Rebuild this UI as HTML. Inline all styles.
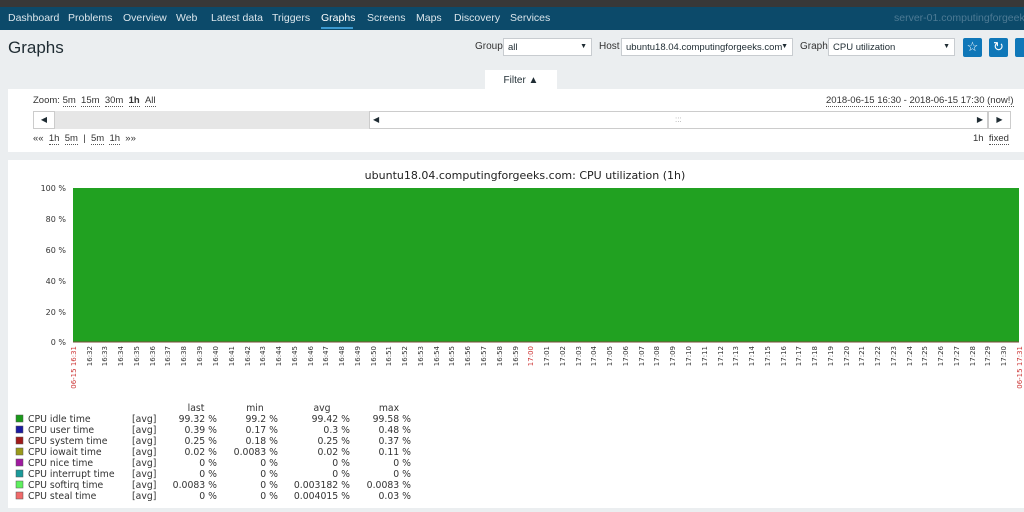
<!DOCTYPE html>
<html><head><meta charset="utf-8"><style>
*{margin:0;padding:0;box-sizing:border-box}
body{width:1024px;height:512px;overflow:hidden;background:#ebeef0;font-family:"Liberation Sans",sans-serif;position:relative;color:#1f2c33}
.a{position:absolute;white-space:nowrap}
.nav{left:0;top:7px;width:1024px;height:23px;background:#0c4a6a;overflow:hidden}
.nav span{position:absolute;top:5px;font-size:10.5px;color:#dbe6ec;white-space:nowrap}
.u{border-bottom:1px dotted #555;line-height:11px}
.sel{height:18px;background:#fff;border:1px solid #c8ccd0;font-size:9.5px;padding:3px 4px;overflow:hidden}
.sel:after{content:"▼";position:absolute;right:4px;top:4px;font-size:7px}
.btn{width:19px;height:19px;background:#0f77b8;border-radius:2px;color:#fff;text-align:center;font-size:13px;line-height:18px}
.sm{font-size:9.5px;color:#333}
</style></head><body>
<div class="a" style="left:0;top:0;width:1024px;height:7px;background:#383838"></div>
<div class="a nav">
<span style="left:8px">Dashboard</span><span style="left:68px">Problems</span><span style="left:123px">Overview</span><span style="left:176px">Web</span><span style="left:211px">Latest data</span><span style="left:272px">Triggers</span><span style="left:321px;color:#fff">Graphs</span><span style="left:367px">Screens</span><span style="left:416px">Maps</span><span style="left:454px">Discovery</span><span style="left:510px">Services</span>
<span style="left:894px;color:#4d7a94">server-01.computingforgeeks.com</span>
<div class="a" style="left:321px;top:20px;width:32px;height:2px;background:#3d9ad0"></div>
</div>
<div class="a" style="left:8px;top:38px;font-size:17px;color:#1f2c33">Graphs</div>
<div class="a sm" style="left:475px;top:41px;font-size:10px">Group</div>
<div class="a sel" style="left:503px;top:38px;width:89px">all</div>
<div class="a sm" style="left:599px;top:41px;font-size:10px">Host</div>
<div class="a sel" style="left:621px;top:38px;width:172px">ubuntu18.04.computingforgeeks.com</div>
<div class="a sm" style="left:800px;top:41px;font-size:10px">Graph</div>
<div class="a sel" style="left:828px;top:38px;width:127px">CPU utilization</div>
<div class="a btn" style="left:963px;top:38px">☆</div>
<div class="a btn" style="left:989px;top:38px">↻</div>
<div class="a btn" style="left:1015px;top:38px"></div>
<div class="a" style="left:485px;top:70px;width:72px;height:20px;background:#fff;font-size:10px;text-align:center;padding-top:5px">Filter ▲</div>
<div class="a" style="left:8px;top:89px;width:1016px;height:63px;background:#fff"></div>
<div class="a sm" style="left:33px;top:95px">Zoom: <span class="u">5m</span> &nbsp;<span class="u">15m</span> &nbsp;<span class="u">30m</span> &nbsp;<b class="u">1h</b> &nbsp;<span class="u">All</span></div>
<div class="a sm" style="left:826px;top:95px"><span class="u">2018-06-15 16:30</span> - <span class="u">2018-06-15 17:30</span> <span class="u">(now!)</span></div>
<div class="a" style="left:33px;top:111px;width:955px;height:18px;background:#e6e6e6"></div>
<div class="a" style="left:33px;top:111px;width:22px;height:18px;background:#fff;border:1px solid #ccc;font-size:8px;text-align:center;line-height:16px">◀</div>
<div class="a" style="left:369px;top:111px;width:619px;height:18px;background:#fff;border:1px solid #ccc;font-size:8px;line-height:16px;padding-left:3px">◀<span style="position:absolute;left:305px;color:#aaa">:::</span><span style="position:absolute;right:4px">▶</span></div>
<div class="a" style="left:988px;top:111px;width:23px;height:18px;background:#fff;border:1px solid #ccc;font-size:8px;text-align:center;line-height:16px">▶</div>
<div class="a sm" style="left:33px;top:133px">«« &nbsp;<span class="u">1h</span> &nbsp;<span class="u">5m</span> &nbsp;| &nbsp;<span class="u">5m</span> &nbsp;<span class="u">1h</span> &nbsp;»»</div>
<div class="a sm" style="left:973px;top:133px">1h &nbsp;<span class="u">fixed</span></div>
<div class="a" style="left:8px;top:160px;width:1016px;height:348px;background:#fff"></div>
<svg class="a" style="left:0;top:0" width="1024" height="512" font-family="DejaVu Sans,sans-serif">
<text x="525" y="179" font-size="11" text-anchor="middle" fill="#222">ubuntu18.04.computingforgeeks.com: CPU utilization (1h)</text>
<rect x="73" y="188" width="946" height="154" fill="#21a121"/>
<line x1="73" y1="342" x2="1019" y2="342" stroke="#7a4a3a" stroke-width="1"/>
<g font-size="8" fill="#333" text-anchor="end">
<text x="66" y="191">100 %</text><text x="66" y="222">80 %</text><text x="66" y="253">60 %</text><text x="66" y="284">40 %</text><text x="66" y="315">20 %</text><text x="66" y="345">0 %</text>
</g>
<g font-size="7" fill="#333" text-anchor="end">
<text transform="translate(76,346) rotate(-90)" fill="#c33">06-15 16:31</text>
<text transform="translate(92,346) rotate(-90)">16:32</text><text transform="translate(107,346) rotate(-90)">16:33</text><text transform="translate(123,346) rotate(-90)">16:34</text><text transform="translate(139,346) rotate(-90)">16:35</text><text transform="translate(155,346) rotate(-90)">16:36</text><text transform="translate(170,346) rotate(-90)">16:37</text><text transform="translate(186,346) rotate(-90)">16:38</text><text transform="translate(202,346) rotate(-90)">16:39</text><text transform="translate(218,346) rotate(-90)">16:40</text><text transform="translate(234,346) rotate(-90)">16:41</text><text transform="translate(250,346) rotate(-90)">16:42</text><text transform="translate(265,346) rotate(-90)">16:43</text><text transform="translate(281,346) rotate(-90)">16:44</text><text transform="translate(297,346) rotate(-90)">16:45</text><text transform="translate(313,346) rotate(-90)">16:46</text><text transform="translate(328,346) rotate(-90)">16:47</text><text transform="translate(344,346) rotate(-90)">16:48</text><text transform="translate(360,346) rotate(-90)">16:49</text><text transform="translate(376,346) rotate(-90)">16:50</text><text transform="translate(391,346) rotate(-90)">16:51</text><text transform="translate(407,346) rotate(-90)">16:52</text><text transform="translate(423,346) rotate(-90)">16:53</text><text transform="translate(439,346) rotate(-90)">16:54</text><text transform="translate(454,346) rotate(-90)">16:55</text><text transform="translate(470,346) rotate(-90)">16:56</text><text transform="translate(486,346) rotate(-90)">16:57</text><text transform="translate(502,346) rotate(-90)">16:58</text><text transform="translate(518,346) rotate(-90)">16:59</text><text transform="translate(533,346) rotate(-90)" fill="#c33">17:00</text><text transform="translate(549,346) rotate(-90)">17:01</text><text transform="translate(565,346) rotate(-90)">17:02</text><text transform="translate(581,346) rotate(-90)">17:03</text><text transform="translate(596,346) rotate(-90)">17:04</text><text transform="translate(612,346) rotate(-90)">17:05</text><text transform="translate(628,346) rotate(-90)">17:06</text><text transform="translate(644,346) rotate(-90)">17:07</text><text transform="translate(659,346) rotate(-90)">17:08</text><text transform="translate(675,346) rotate(-90)">17:09</text><text transform="translate(691,346) rotate(-90)">17:10</text><text transform="translate(707,346) rotate(-90)">17:11</text><text transform="translate(723,346) rotate(-90)">17:12</text><text transform="translate(738,346) rotate(-90)">17:13</text><text transform="translate(754,346) rotate(-90)">17:14</text><text transform="translate(770,346) rotate(-90)">17:15</text><text transform="translate(786,346) rotate(-90)">17:16</text><text transform="translate(801,346) rotate(-90)">17:17</text><text transform="translate(817,346) rotate(-90)">17:18</text><text transform="translate(833,346) rotate(-90)">17:19</text><text transform="translate(849,346) rotate(-90)">17:20</text><text transform="translate(864,346) rotate(-90)">17:21</text><text transform="translate(880,346) rotate(-90)">17:22</text><text transform="translate(896,346) rotate(-90)">17:23</text><text transform="translate(912,346) rotate(-90)">17:24</text><text transform="translate(927,346) rotate(-90)">17:25</text><text transform="translate(943,346) rotate(-90)">17:26</text><text transform="translate(959,346) rotate(-90)">17:27</text><text transform="translate(975,346) rotate(-90)">17:28</text><text transform="translate(990,346) rotate(-90)">17:29</text><text transform="translate(1006,346) rotate(-90)">17:30</text>
<text transform="translate(1022,346) rotate(-90)" fill="#c33">06-15 17:31</text>
</g>
<g font-size="9.3" fill="#333">
<g text-anchor="middle"><text x="196" y="411">last</text><text x="255" y="411">min</text><text x="322" y="411">avg</text><text x="389" y="411">max</text></g>
<g stroke="#555" stroke-width="0.5">
<rect x="16" y="415" width="7" height="7" fill="#1a9a1a"/><rect x="16" y="426" width="7" height="7" fill="#1a1aa0"/><rect x="16" y="437" width="7" height="7" fill="#a01a1a"/><rect x="16" y="448" width="7" height="7" fill="#9a9a1a"/><rect x="16" y="459" width="7" height="7" fill="#a01aa0"/><rect x="16" y="470" width="7" height="7" fill="#1a9a9a"/><rect x="16" y="481" width="7" height="7" fill="#5ef05e"/><rect x="16" y="492" width="7" height="7" fill="#f06a6a"/>
</g>
<text x="28" y="422">CPU idle time</text><text x="28" y="433">CPU user time</text><text x="28" y="444">CPU system time</text><text x="28" y="455">CPU iowait time</text><text x="28" y="466">CPU nice time</text><text x="28" y="477">CPU interrupt time</text><text x="28" y="488">CPU softirq time</text><text x="28" y="499">CPU steal time</text>
<g><text x="132" y="422">[avg]</text><text x="132" y="433">[avg]</text><text x="132" y="444">[avg]</text><text x="132" y="455">[avg]</text><text x="132" y="466">[avg]</text><text x="132" y="477">[avg]</text><text x="132" y="488">[avg]</text><text x="132" y="499">[avg]</text></g>
<g text-anchor="end">
<text x="217" y="422">99.32 %</text><text x="217" y="433">0.39 %</text><text x="217" y="444">0.25 %</text><text x="217" y="455">0.02 %</text><text x="217" y="466">0 %</text><text x="217" y="477">0 %</text><text x="217" y="488">0.0083 %</text><text x="217" y="499">0 %</text>
<text x="278" y="422">99.2 %</text><text x="278" y="433">0.17 %</text><text x="278" y="444">0.18 %</text><text x="278" y="455">0.0083 %</text><text x="278" y="466">0 %</text><text x="278" y="477">0 %</text><text x="278" y="488">0 %</text><text x="278" y="499">0 %</text>
<text x="350" y="422">99.42 %</text><text x="350" y="433">0.3 %</text><text x="350" y="444">0.25 %</text><text x="350" y="455">0.02 %</text><text x="350" y="466">0 %</text><text x="350" y="477">0 %</text><text x="350" y="488">0.003182 %</text><text x="350" y="499">0.004015 %</text>
<text x="411" y="422">99.58 %</text><text x="411" y="433">0.48 %</text><text x="411" y="444">0.37 %</text><text x="411" y="455">0.11 %</text><text x="411" y="466">0 %</text><text x="411" y="477">0 %</text><text x="411" y="488">0.0083 %</text><text x="411" y="499">0.03 %</text>
</g>
</g>
</svg>
</body></html>
